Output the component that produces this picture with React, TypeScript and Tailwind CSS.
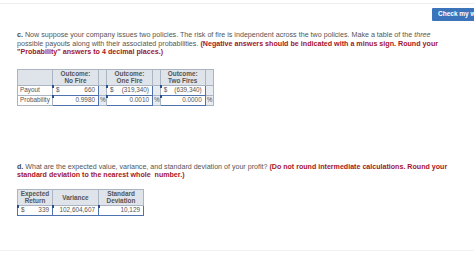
import type { ReactNode } from "react";

function Marker() {
  return <span className="absolute -left-px -top-px h-[3px] w-[2px] bg-[#2a4f8f]" />;
}

function InputCell({ prefix, value }: { prefix?: string; value: string }) {
  return (
    <td className="relative h-[10px] border border-[#4d72ad] bg-white p-0">
      <Marker />
      <div className="flex h-full items-center justify-between px-[3px] leading-none">
        <span>{prefix}</span>
        <span>{value}</span>
      </div>
    </td>
  );
}

function Pct({ show = true }: { show?: boolean }) {
  return (
    <td className="border border-[#aab4c3] bg-[#e8ebf0] p-0 text-left leading-none">
      {show ? <span className="pl-px">%</span> : null}
    </td>
  );
}

function Head({ children, w }: { children?: ReactNode; w: string }) {
  return (
    <th className={`${w} border border-[#aab4c3] bg-[#dfe3ea] p-0 text-center font-bold leading-[7px] text-[#555]`}>
      {children}
    </th>
  );
}

export default function App() {
  return (
    <div className="relative h-[258px] w-[474px] overflow-hidden bg-white font-['Liberation_Sans',Arial,sans-serif] text-[#555]">
      <div className="mt-[3px] h-px bg-[#eeeeee]" />
      <div className="flex justify-end pt-[4px]">
        <button className="-mr-[20px] h-[13px] w-[62px] whitespace-nowrap rounded-[1px] bg-[#3c74bb] pl-[6px] text-left text-[6.5px] font-bold leading-none text-white">
          Check my work
        </button>
      </div>

      <div className="px-[17px]">
        <p className="mt-[10px] whitespace-nowrap text-[7.15px] leading-[8.5px]">
          <b className="text-[#444]">c.</b> Now suppose your company issues two policies. The risk of fire is independent across the two
          policies. Make a table of the <i>three</i>
          <br />
          possible payouts along with their associated probabilities.{" "}
          <b className="text-[#a3162b]">
            (Negative answers should be indicated with a minus sign. Round your
            <br />
            "Probability" answers to 4 decimal places.)
          </b>
        </p>

        <table className="mt-[12px] table-fixed border-collapse text-[6.4px] text-[#555]">
          <thead>
            <tr className="h-[16px]">
              <Head w="w-[35px]" />
              <Head w="w-[46px]">
                Outcome:
                <br />
                No Fire
              </Head>
              <Head w="w-[8px]" />
              <Head w="w-[46px]">
                Outcome:
                <br />
                One Fire
              </Head>
              <Head w="w-[6px]" />
              <Head w="w-[45px]">
                Outcome:
                <br />
                Two Fires
              </Head>
              <Head w="w-[8px]" />
            </tr>
          </thead>
          <tbody>
            <tr className="h-[10px]">
              <td className="border border-[#aab4c3] bg-white p-0 pl-[2px] leading-none">Payout</td>
              <InputCell prefix="$" value="660" />
              <Pct show={false} />
              <InputCell prefix="$" value="(319,340)" />
              <Pct show={false} />
              <InputCell prefix="$" value="(639,340)" />
              <Pct show={false} />
            </tr>
            <tr className="h-[10px]">
              <td className="border border-[#aab4c3] bg-white p-0 pl-[2px] leading-none">Probability</td>
              <InputCell value="0.9980" />
              <Pct />
              <InputCell value="0.0010" />
              <Pct />
              <InputCell value="0.0000" />
              <Pct />
            </tr>
          </tbody>
        </table>

        <p className="mt-[57px] whitespace-nowrap text-[7.1px] leading-[8.5px]">
          <b className="text-[#444]">d.</b> What are the expected value, variance, and standard deviation of your profit?{" "}
          <b className="text-[#a3162b]">
            (Do not round intermediate calculations. Round your
            <br />
            standard deviation to the nearest whole&nbsp; number.)
          </b>
        </p>

        <table className="mt-[9px] table-fixed border-collapse text-[6.4px] text-[#555]">
          <thead>
            <tr className="h-[16px]">
              <Head w="w-[35px]">
                Expected
                <br />
                Return
              </Head>
              <Head w="w-[46px]">Variance</Head>
              <Head w="w-[45px]">
                Standard
                <br />
                Deviation
              </Head>
            </tr>
          </thead>
          <tbody>
            <tr className="h-[10px]">
              <InputCell prefix="$" value="339" />
              <InputCell value="102,604,607" />
              <InputCell value="10,129" />
            </tr>
          </tbody>
        </table>
      </div>

      <div className="absolute bottom-[7px] left-0 right-0 h-px bg-[#f2f2f2]" />
    </div>
  );
}
